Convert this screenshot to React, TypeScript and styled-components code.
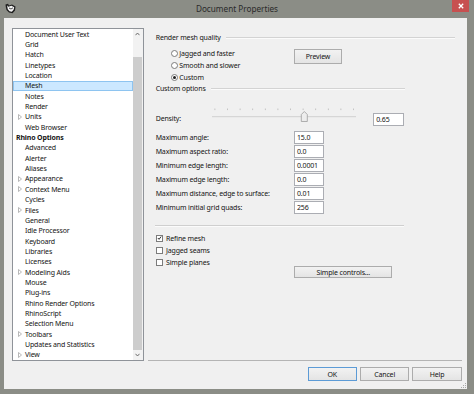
import React from 'react';
import styled, { createGlobalStyle, css } from 'styled-components';

const UI_FONT = `'Noto Sans', 'Open Sans', 'DejaVu Sans', sans-serif`;

const GlobalStyle = createGlobalStyle`
  html, body {
    margin: 0;
    padding: 0;
    background: #8b8d86;
  }
  * {
    box-sizing: border-box;
  }
`;

const Frame = styled.div`
  width: 474px;
  height: 394px;
  background: #8b8d86;
  display: flex;
  flex-direction: column;
  overflow: hidden;
  font-family: ${UI_FONT};
  font-size: 7px;
  letter-spacing: -0.15px;
  color: #141414;
`;

const TitleBar = styled.div`
  height: 18px;
  flex: none;
  display: grid;
  grid-template-columns: 1fr auto 1fr;
  align-items: start;
`;

const AppIcon = styled.svg`
  margin: 3px 0 0 5px;
  display: block;
`;

const Title = styled.div`
  font-size: 8.2px;
  letter-spacing: 0;
  line-height: 18px;
  color: #2a2a2a;
`;

const CloseButton = styled.div`
  justify-self: end;
  width: 17px;
  height: 12px;
  margin-right: 5px;
  background: #c75050;
  display: flex;
  align-items: center;
  justify-content: center;
`;

const Body = styled.div`
  flex: 1;
  padding: 0 7px 5px 4px;
  display: flex;
`;

const Client = styled.div`
  position: relative;
  flex: 1;
  background: #f0f0f0;
  display: flex;
  flex-direction: column;
`;

const Main = styled.div`
  display: flex;
  padding: 10px 0 0 7.7px;
`;

/* ---------- tree ---------- */

const Tree = styled.div`
  width: 132px;
  height: 333px;
  border: 1px solid #8f9399;
  background: #fff;
  display: flex;
  overflow: hidden;
`;

const TreeList = styled.div`
  flex: 1;
  display: flex;
  flex-direction: column;
`;

const TreeRow = styled.div<{ $selected?: boolean; $header?: boolean }>`
  height: 10.35px;
  flex: none;
  display: flex;
  align-items: center;
  white-space: nowrap;
  padding-left: ${({ $header }) => ($header ? 3.3 : 0)}px;
  font-weight: ${({ $header }) => ($header ? 700 : 400)};
  ${({ $selected }) =>
    $selected &&
    css`
      background: #cce8ff;
      box-shadow: inset 0 0 0 1px #8ec4f0;
    `}
`;

const ExpandSlot = styled.span`
  width: 12.3px;
  flex: none;
  display: flex;
  align-items: center;
  padding-left: 5px;
`;

const ScrollBar = styled.div`
  width: 10px;
  flex: none;
  display: flex;
  flex-direction: column;
  background: #f2f2f2;
  padding: 0 0.5px;
`;

const ScrollArrow = styled.div`
  height: 10px;
  flex: none;
  display: flex;
  align-items: center;
  justify-content: center;
`;

const ScrollTrack = styled.div`
  flex: 1;
  display: flex;
  flex-direction: column;
  padding-top: 17.7px;
`;

const ScrollThumb = styled.div`
  flex: 1;
  background: #cdcdcd;
`;

/* ---------- right panel ---------- */

const Panel = styled.div`
  width: 314px;
  height: 333px;
  margin-left: 4.3px;
  border-bottom: 1px solid #b4b4b4;
  padding: 4px 7px 0 7.7px;
  display: flex;
  flex-direction: column;
`;

const GroupHeader = styled.div<{ $lineEnd: number; $gap: number }>`
  height: 11px;
  flex: none;
  display: flex;
  align-items: center;
  gap: ${({ $gap }) => $gap}px;
  margin-right: ${({ $lineEnd }) => $lineEnd}px;
  &::after {
    content: '';
    flex: 1;
    border-top: 1px solid #d3d3d3;
    border-bottom: 1px solid #fbfbfb;
  }
`;

const ChoiceGrid = styled.div`
  display: grid;
  grid-template-columns: 138.3px auto;
  margin-top: 4px;
`;

const RadioList = styled.div`
  padding-left: 15.3px;
  display: flex;
  flex-direction: column;
`;

const OptionRow = styled.div<{ $gap: number }>`
  height: 12px;
  display: flex;
  align-items: center;
  gap: ${({ $gap }) => $gap}px;
  white-space: nowrap;
`;

const CheckRow = styled(OptionRow)`
  grid-column: 1;
`;

const RadioDot = styled.span<{ $checked?: boolean }>`
  width: 7px;
  height: 7px;
  border-radius: 50%;
  border: 1px solid #7c7c7c;
  background: #fff;
  display: flex;
  align-items: center;
  justify-content: center;
  &::after {
    content: '';
    width: 3px;
    height: 3px;
    border-radius: 50%;
    background: #1e1e1e;
    display: ${({ $checked }) => ($checked ? 'block' : 'none')};
  }
`;

const CheckBox = styled.span`
  width: 7px;
  height: 7px;
  flex: none;
  border: 1px solid #7c7c7c;
  background: #fff;
  display: flex;
  align-items: center;
  justify-content: center;
`;

const PushButton = styled.button<{ $w: number; $h: number; $default?: boolean }>`
  width: ${({ $w }) => $w}px;
  height: ${({ $h }) => $h}px;
  padding: 0;
  font-family: ${UI_FONT};
  font-size: 7px;
  letter-spacing: -0.15px;
  color: #141414;
  background: linear-gradient(#f2f2f2, #e4e4e4);
  border: 1px solid ${({ $default }) => ($default ? '#5c9bd6' : '#acacac')};
  border-radius: 0;
`;

const PreviewButton = styled(PushButton)`
  margin-top: 2px;
  justify-self: start;
`;

const SliderRow = styled.div`
  display: grid;
  grid-template-columns: 56px 144.3px 31px;
  height: 21px;
  margin-top: 11px;
`;

const SliderLabel = styled.div`
  align-self: end;
  line-height: 11px;
  margin-bottom: 2.5px;
`;

const SliderValue = styled.div`
  align-self: end;
  margin-left: 17.3px;
  width: 31px;
  height: 13px;
  border: 1px solid #abadb3;
  background: #fff;
  padding-left: 2px;
  display: flex;
  align-items: center;
`;

const FieldGrid = styled.div`
  display: grid;
  grid-template-columns: 138.3px 30.5px;
  grid-auto-rows: 14px;
  margin-top: 5px;
`;

const FieldLabel = styled.div`
  line-height: 14px;
  white-space: nowrap;
`;

const FieldBox = styled.div`
  height: 13px;
  border: 1px solid #abadb3;
  background: #fff;
  padding-left: 2px;
  display: flex;
  align-items: center;
`;

const Rule = styled.div`
  margin: 10px 0 0 -0.7px;
  width: 249px;
  border-top: 1px solid #cfcfcf;
  border-bottom: 1px solid #fbfbfb;
`;

const CheckGrid = styled.div`
  display: grid;
  grid-template-columns: 138.3px 98px;
  grid-template-rows: repeat(4, 12px);
  margin-top: 5px;
  padding-left: 0.3px;
`;

const SimpleButton = styled(PushButton)`
  grid-column: 2;
  grid-row: 3 / span 2;
  align-self: end;
  margin-bottom: 1.7px;
`;

/* ---------- footer ---------- */

const Footer = styled.div`
  display: flex;
  justify-content: flex-end;
  gap: 3px;
  padding: 6.3px 5.3px 0 0;
`;

const Grip = styled.svg`
  position: absolute;
  right: 0;
  bottom: 0;
`;

type TreeItem = { label: string; expandable?: boolean; header?: boolean; selected?: boolean };

const treeItems: TreeItem[] = [
  { label: 'Document User Text' },
  { label: 'Grid' },
  { label: 'Hatch' },
  { label: 'Linetypes' },
  { label: 'Location' },
  { label: 'Mesh', selected: true },
  { label: 'Notes' },
  { label: 'Render' },
  { label: 'Units', expandable: true },
  { label: 'Web Browser' },
  { label: 'Rhino Options', header: true },
  { label: 'Advanced' },
  { label: 'Alerter' },
  { label: 'Aliases' },
  { label: 'Appearance', expandable: true },
  { label: 'Context Menu', expandable: true },
  { label: 'Cycles' },
  { label: 'Files', expandable: true },
  { label: 'General' },
  { label: 'Idle Processor' },
  { label: 'Keyboard' },
  { label: 'Libraries' },
  { label: 'Licenses' },
  { label: 'Modeling Aids', expandable: true },
  { label: 'Mouse' },
  { label: 'Plug-ins' },
  { label: 'Rhino Render Options' },
  { label: 'RhinoScript' },
  { label: 'Selection Menu' },
  { label: 'Toolbars', expandable: true },
  { label: 'Updates and Statistics' },
  { label: 'View', expandable: true },
];

const meshFields = [
  ['Maximum angle:', '15.0'],
  ['Maximum aspect ratio:', '0.0'],
  ['Minimum edge length:', '0.0001'],
  ['Maximum edge length:', '0.0'],
  ['Maximum distance, edge to surface:', '0.01'],
  ['Minimum initial grid quads:', '256'],
];

const ExpandArrow = () => (
  <svg width="4" height="6" viewBox="0 0 4 6">
    <path d="M0.5 0.5 L3.5 3 L0.5 5.5 Z" fill="none" stroke="#a6a6a6" strokeWidth="0.8" />
  </svg>
);

const Chevron = ({ up }: { up?: boolean }) => (
  <svg width="5" height="4" viewBox="0 0 5 4">
    <path d={up ? 'M0.5 3.2 L2.5 1 L4.5 3.2' : 'M0.5 0.8 L2.5 3 L4.5 0.8'} fill="none" stroke="#606060" strokeWidth="0.9" />
  </svg>
);

const Tick = () => (
  <svg width="6" height="6" viewBox="0 0 6 6">
    <path d="M1 3 L2.5 4.6 L5 1.2" fill="none" stroke="#1a1a1a" strokeWidth="1.1" />
  </svg>
);

const DensitySlider = () => {
  const ticks = Array.from({ length: 12 }, (_, i) => 2.5 + i * 12.6);
  return (
    <svg width="144.3" height="21" viewBox="0 0 144.3 21">
      {ticks.map((x) => (
        <rect key={x} x={x} y={3.5} width={0.8} height={1.6} fill="#b9b9b9" />
      ))}
      <rect x={0} y={11} width={144.3} height={1} fill="#d6d6d6" />
      <rect x={0} y={12} width={144.3} height={0.8} fill="#e9e9e9" />
      <path d="M89.3 16.5 L89.3 9.5 L92.3 6.5 L95.3 9.5 L95.3 16.5 Z" fill="#ededed" stroke="#9c9c9c" strokeWidth="0.8" />
    </svg>
  );
};

export default function App() {
  return (
    <>
      <GlobalStyle />
      <Frame>
        <TitleBar>
          <AppIcon width="11" height="11" viewBox="0 0 11 11">
            <path d="M0.5 1.5 L3 0.8 L4 2.5 L7 1.5 L10.5 3.5 L10 7.5 L7.5 10.2 L4 9.5 L1.5 7 L0.8 4 Z" fill="#1f1f1f" />
            <path d="M2 2.2 L3.3 3.8 L6.5 2.8 L9.2 4.2 L8.6 6.8 L6.8 8.8 L4.5 8.2 L2.8 6.2 Z" fill="#f4f4f4" />
            <path d="M4 5 L6 6 L8 4.8" fill="none" stroke="#1f1f1f" strokeWidth="0.8" />
          </AppIcon>
          <Title>Document Properties</Title>
          <CloseButton>
            <svg width="6" height="6" viewBox="0 0 6 6">
              <path d="M0.8 0.8 L5.2 5.2 M5.2 0.8 L0.8 5.2" stroke="#fff" strokeWidth="1.3" />
            </svg>
          </CloseButton>
        </TitleBar>
        <Body>
          <Client>
            <Main>
              <Tree>
                <TreeList>
                  {treeItems.map((item) => (
                    <TreeRow key={item.label} $selected={item.selected} $header={item.header}>
                      {!item.header && <ExpandSlot>{item.expandable && <ExpandArrow />}</ExpandSlot>}
                      {item.label}
                    </TreeRow>
                  ))}
                </TreeList>
                <ScrollBar>
                  <ScrollArrow>
                    <Chevron up />
                  </ScrollArrow>
                  <ScrollTrack>
                    <ScrollThumb />
                  </ScrollTrack>
                  <ScrollArrow>
                    <Chevron />
                  </ScrollArrow>
                </ScrollBar>
              </Tree>

              <Panel>
                <GroupHeader $lineEnd={0} $gap={5}>Render mesh quality</GroupHeader>
                <ChoiceGrid>
                  <RadioList>
                    <OptionRow $gap={1.3}>
                      <RadioDot />
                      Jagged and faster
                    </OptionRow>
                    <OptionRow $gap={1.3}>
                      <RadioDot />
                      Smooth and slower
                    </OptionRow>
                    <OptionRow $gap={1.3}>
                      <RadioDot $checked />
                      Custom
                    </OptionRow>
                  </RadioList>
                  <PreviewButton $w={48} $h={14.7}>
                    Preview
                  </PreviewButton>
                </ChoiceGrid>

                <GroupHeader $lineEnd={50} $gap={5}>Custom options</GroupHeader>
                <SliderRow>
                  <SliderLabel>Density:</SliderLabel>
                  <DensitySlider />
                  <SliderValue>0.65</SliderValue>
                </SliderRow>

                <FieldGrid>
                  {meshFields.map(([label, value]) => (
                    <React.Fragment key={label}>
                      <FieldLabel>{label}</FieldLabel>
                      <FieldBox>{value}</FieldBox>
                    </React.Fragment>
                  ))}
                </FieldGrid>

                <Rule />

                <CheckGrid>
                  <CheckRow $gap={3}>
                    <CheckBox>
                      <Tick />
                    </CheckBox>
                    Refine mesh
                  </CheckRow>
                  <CheckRow $gap={3}>
                    <CheckBox />
                    Jagged seams
                  </CheckRow>
                  <CheckRow $gap={3}>
                    <CheckBox />
                    Simple planes
                  </CheckRow>
                  <SimpleButton $w={98} $h={12.6}>
                    Simple controls...
                  </SimpleButton>
                </CheckGrid>
              </Panel>
            </Main>

            <Footer>
              <PushButton $w={49.4} $h={13.7} $default>
                OK
              </PushButton>
              <PushButton $w={49.4} $h={13.7}>
                Cancel
              </PushButton>
              <PushButton $w={49.4} $h={13.7}>
                Help
              </PushButton>
            </Footer>

            <Grip width="7" height="7" viewBox="0 0 7 7">
              {[
                [5.5, 1.5],
                [3.5, 3.5],
                [5.5, 3.5],
                [1.5, 5.5],
                [3.5, 5.5],
                [5.5, 5.5],
              ].map(([x, y]) => (
                <rect key={`${x}-${y}`} x={x - 0.5} y={y - 0.5} width="1" height="1" fill="#a8a8a8" />
              ))}
            </Grip>
          </Client>
        </Body>
      </Frame>
    </>
  );
}
